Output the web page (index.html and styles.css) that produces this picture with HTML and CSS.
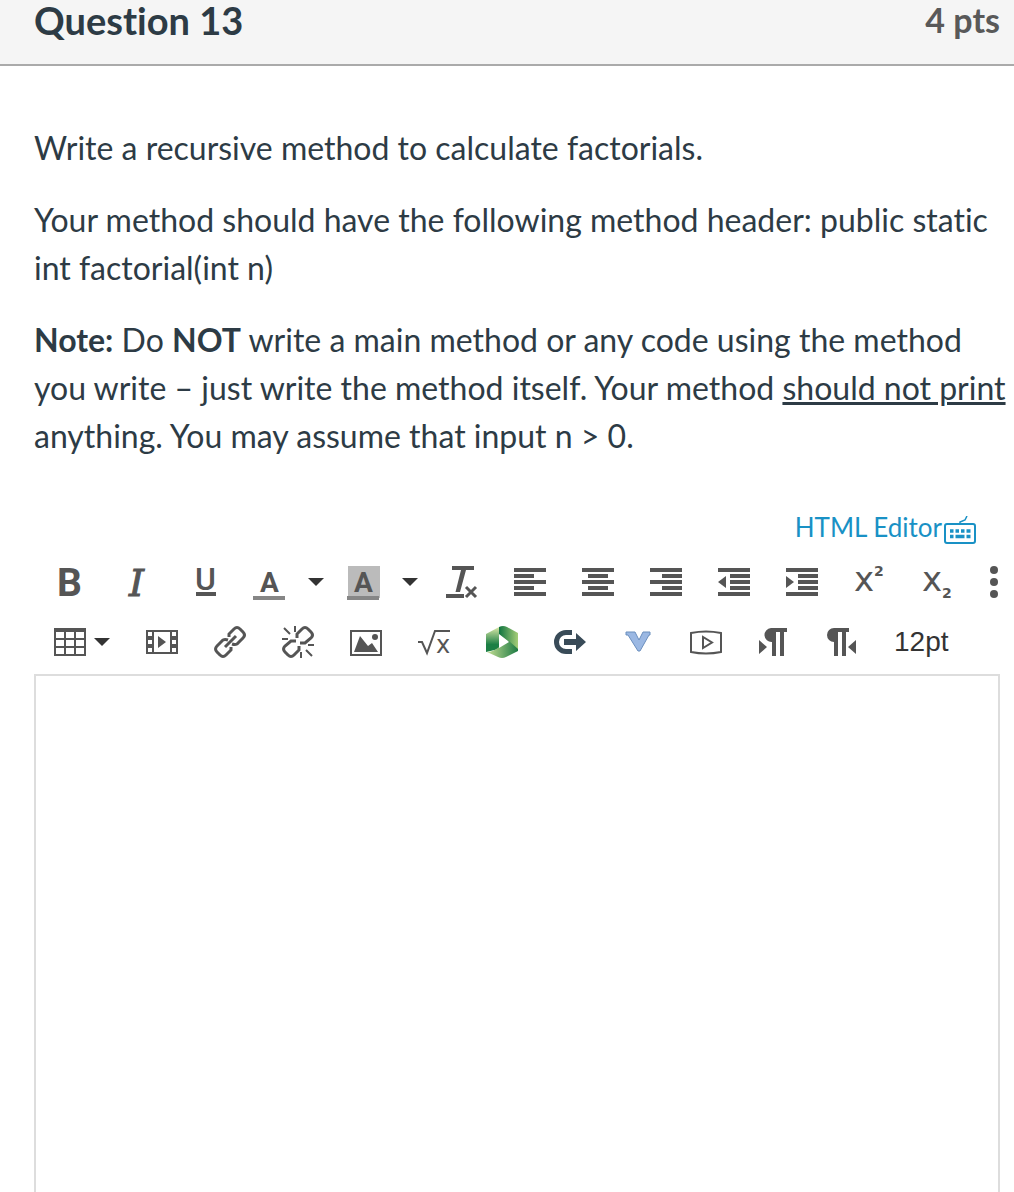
FILE: index.html
```html
<!DOCTYPE html>
<html lang="en">
	<head>
		<title>Question 13</title>
		<meta charset="utf-8">
		<meta name="viewport" content="width=device-width, initial-scale=1.0">
		<link rel="stylesheet" href="styles.css">
	</head>

	<body>
		<header class="question-header">
			<h1>Question 13</h1>
			<span class="points">4 pts</span>
		</header>

		<main class="question">
			<div class="question-text">
				<p>Write a recursive method to calculate factorials.</p>
				<p>Your method should have the following method header: public static int factorial(int n)</p>
				<p><strong>Note:</strong> Do <strong>NOT</strong> write a main method or any code using the method you write – just write the method itself. Your method <u>should not print</u> anything. You may assume that input n &gt; 0.</p>
			</div>

			<div class="editor-links">
				<a href="#html">HTML Editor</a>
				<a href="#shortcuts" aria-label="Keyboard shortcuts">
					<svg width="32" height="32" viewBox="0 0 32 32" fill="none" stroke="currentColor">
						<rect x="1" y="8" width="30" height="19" rx="2" stroke-width="2"/>
						<path d="M16 8V6l5-2 2-4" stroke-width="1.5"/>
						<path d="M6 15h3.500m2 0h3.500m2 0h3.500m2 0h4M6 20.500h3.500m2 0h9m2 0h4" stroke-width="3.500"/>
					</svg>
				</a>
			</div>

			<div class="toolbar">
				<div class="toolbar-row">
					<button type="button" aria-label="Bold"><svg class="icon" viewBox="0 0 32 32"><text class="bold" x="3" y="30">B</text></svg></button>
					<button type="button" aria-label="Italic"><svg class="icon" viewBox="0 0 32 32"><text class="italic" x="7" y="30">I</text></svg></button>
					<button type="button" aria-label="Underline"><svg class="icon" viewBox="0 0 32 32"><text class="under" x="5" y="24">U</text><path d="M6 26h20v4H6z"/></svg></button>
					<button type="button" class="split" aria-label="Text color"><svg class="icon icon-color" viewBox="0 0 33 32"><text class="color" x="7" y="26">A</text><path class="swatch" d="M0 30h32v4H0z"/></svg><i class="caret"></i></button>
					<button type="button" class="split" aria-label="Background color"><svg class="icon icon-color" viewBox="0 0 33 32"><path class="fill" d="M1 0h32v32H1z"/><text class="color" x="7" y="26">A</text><path class="swatch" d="M0 30h32v4H0z"/></svg><i class="caret"></i></button>
					<button type="button" aria-label="Clear formatting"><svg class="icon" viewBox="0 0 32 32"><path d="M6 0h22v4H20l-6 22h-4.500L15 4H6zM0 28h18v4H0z"/><path class="line thick" d="M20 21l10 10m0-10L20 31"/></svg></button>
					<button type="button" aria-label="Align left"><svg class="icon" viewBox="0 0 32 32"><path d="M0 2h32v4H0zM0 8h20v4H0zM0 14h32v4H0zM0 20h20v4H0zM0 26h32v4H0z"/></svg></button>
					<button type="button" aria-label="Align center"><svg class="icon" viewBox="0 0 32 32"><path d="M0 2h32v4H0zM6 8h20v4H6zM0 14h32v4H0zM6 20h20v4H6zM0 26h32v4H0z"/></svg></button>
					<button type="button" aria-label="Align right"><svg class="icon" viewBox="0 0 32 32"><path d="M0 2h32v4H0zM12 8h20v4H12zM0 14h32v4H0zM12 20h20v4H12zM0 26h32v4H0z"/></svg></button>
					<button type="button" aria-label="Decrease indent"><svg class="icon" viewBox="0 0 32 32"><path d="M0 2h32v4H0zM12 8h20v4H12zM12 14h20v4H12zM12 20h20v4H12zM0 26h32v4H0zM8 10v12L0 16z"/></svg></button>
					<button type="button" aria-label="Increase indent"><svg class="icon" viewBox="0 0 32 32"><path d="M0 2h32v4H0zM12 8h20v4H12zM12 14h20v4H12zM12 20h20v4H12zM0 26h32v4H0zM0 10v12l8-6z"/></svg></button>
					<button type="button" aria-label="Superscript"><svg class="icon" viewBox="0 0 32 32"><text class="var" x="0" y="25">x</text><text class="script" x="20" y="10">2</text></svg></button>
					<button type="button" aria-label="Subscript"><svg class="icon" viewBox="0 0 32 32"><text class="var" x="0" y="25">x</text><text class="script" x="20" y="32">2</text></svg></button>
					<button type="button" class="more" aria-label="More"><svg class="icon" viewBox="0 0 32 32"><circle cx="16" cy="4" r="4"/><circle cx="16" cy="16" r="4"/><circle cx="16" cy="28" r="4"/></svg></button>
				</div>

				<div class="toolbar-row">
					<button type="button" class="table-menu" aria-label="Table"><svg class="icon" viewBox="0 0 32 32"><path fill-rule="evenodd" d="M0 2h32v28H0zM2 6v6h8V6zM12 6v6h8V6zM22 6v6h8V6zM2 14v6h8v-6zM12 14v6h8v-6zM22 14v6h8v-6zM2 22v6h8v-6zM12 22v6h8v-6zM22 22v6h8v-6z"/></svg><i class="caret"></i></button>
					<button type="button" aria-label="Media"><svg class="icon" viewBox="0 0 32 32"><path fill-rule="evenodd" d="M0 4h32v24H0zM8 6v20h16V6zM2 6v4h4V6zM2 14v4h4v-4zM2 22v4h4v-4zM26 6v4h4V6zM26 14v4h4v-4zM26 22v4h4v-4zM12 10v12l8-6z"/></svg></button>
					<button type="button" aria-label="Link"><svg class="icon" viewBox="0 0 32 32"><path class="line thick" d="M15 11v-3l5-5q3-3 6 0l3 3q3 3 0 6l-6 6q-2 1-5 0M17 21v3l-5 5q-3 3-6 0l-3-3q-3-3 0-6l6-6q2-1 5 0M11 21l11-11"/></svg></button>
					<button type="button" aria-label="Remove link"><svg class="icon" viewBox="0 0 32 32"><path class="line thick" d="M15 12V8l5-5q3-3 6 0l3 3q3 3 0 6l-6 5h-5M17 20v4l-5 5q-3 3-6 0l-3-3q-3-3 0-6l6-5h5"/><path class="line" d="M2 2l6 6M13 0v6M0 13h6M24 24l6 6M19 26v6M26 19h6"/></svg></button>
					<button type="button" aria-label="Image"><svg class="icon" viewBox="0 0 32 32"><path fill-rule="evenodd" d="M0 4h32v26H0zM2 6v22h28V6z"/><circle cx="25" cy="11" r="3"/><path d="M4 26l6-16 8 10 4-3 6 9z"/></svg></button>
					<button type="button" aria-label="Math equation"><svg class="icon" viewBox="0 0 32 32"><path class="line" d="M0 16h4l5 11 8-22h15"/><text class="root" x="18" y="27">x</text></svg></button>
					<button type="button" aria-label="Panopto">
						<svg class="icon" viewBox="0 0 32 32">
							<linearGradient id="left-side" x2="0" y2="1"><stop offset="0" stop-color="#dbe8a8"/><stop offset=".7" stop-color="#1c7f45"/></linearGradient>
							<linearGradient id="right-side"><stop offset="0" stop-color="#0f7440"/><stop offset="1" stop-color="#a5cd78"/></linearGradient>
							<linearGradient id="bottom-side"><stop offset="0" stop-color="#c4de93"/><stop offset="1" stop-color="#1c7a43"/></linearGradient>
							<path fill="url(#left-side)" d="M0 8L13 1v22L0 26z"/>
							<path fill="url(#right-side)" d="M13 1q4-2 8 0l11 6v18L22 15l-9-7z"/>
							<path fill="url(#bottom-side)" d="M1 26q6 0 12-5l10-6 9 8v2l-12 6q-4 2-8 0z"/>
							<path fill="#fff" d="M13 10l10 6-10 6z"/>
						</svg>
					</button>
					<button type="button" aria-label="Embed content"><svg class="icon navy" viewBox="0 0 32 32"><path d="M18 4h-6a12 12 0 0 0 0 24h6v-5h-6a7 7 0 0 1 0-14h6z"/><path d="M10 13h12V7l10 9-10 9v-6H10z"/></svg></button>
					<button type="button" aria-label="Vendor tool"><svg class="icon" viewBox="0 0 32 32"><path fill="#9bb8e3" stroke="#6b8fbe" d="M4 6h9l4 8 4-8h7v3h-1l-9 16h-2L6 9H4z"/></svg></button>
					<button type="button" aria-label="Video"><svg class="icon" viewBox="0 0 32 32"><path class="line" d="M1 7q15-3 30 0v19q-15 3-30 0zM13 11v11l9-5.500z"/></svg></button>
					<button type="button" aria-label="Left to right"><svg class="icon" viewBox="0 0 32 32"><path d="M1 14v14l8-7zM13 2h16v4h-3v24h-4V6h-4v24h-4V16a7 7 0 0 1-1-14z"/></svg></button>
					<button type="button" aria-label="Right to left"><svg class="icon" viewBox="0 0 32 32"><path d="M30 14v14l-8-7zM8 2h15v4h-3v24h-4V6h-4v24H8V16A7 7 0 0 1 8 2z"/></svg></button>
					<button type="button" class="font-size">12pt</button>
				</div>
			</div>

			<textarea class="answer" aria-label="Answer"></textarea>
		</main>
	</body>
</html>
```
FILE: styles.css
```css
* {
	box-sizing: border-box;
}

body {
	margin: 0;
	min-height: 100vh;
	display: flex;
	flex-direction: column;
	background: #fff;
	color: #2d3b45;
	font-family: Lato, sans-serif;
	font-size: 32px;
	font-variant-ligatures: none;
	line-height: 48px;
}

.question-header {
	display: flex;
	justify-content: space-between;
	padding: 0 14px 24px 34px;
	background: #f5f5f5;
	border-bottom: 2px solid #aaa;
	line-height: 40px;
}

.question-header h1 {
	margin: 0;
	font-size: 38px;
	line-height: inherit;
}

.points {
	color: #595959;
	font-size: 34px;
	font-weight: bold;
}

.question {
	flex: 1;
	display: flex;
	flex-direction: column;
	padding: 58px 14px 0 34px;
}

.question-text {
	margin-right: -8px;
}

.question-text p {
	margin: 0 0 24px;
}

.editor-links {
	display: flex;
	justify-content: flex-end;
	gap: 2px;
	padding: 27px 24px 0 0;
	font-size: 26px;
	line-height: 32px;
}

.editor-links a {
	color: #1991c5;
	text-decoration: none;
}

.editor-links svg {
	display: block;
	margin-top: 5px;
}

/* toolbar */
.toolbar {
	margin: 4px -14px 0 2px;
}

.toolbar-row {
	display: flex;
	height: 60px;
}

.toolbar button {
	display: flex;
	flex: none;
	align-items: center;
	width: 68px;
	padding: 0 18px;
	border: 0;
	background: none;
	color: #333;
}

.toolbar .split {
	width: 94px;
	padding: 0 14px 0 13px;
	gap: 22px;
}

.toolbar .table-menu {
	width: 92px;
	padding-right: 0;
	gap: 8px;
}

.toolbar .more {
	width: 42px;
	padding: 0 6px;
}

.toolbar .font-size {
	width: 90px;
	font: 28px "Liberation Sans", sans-serif;
}

.caret {
	border: 8px solid transparent;
	border-top-color: #333;
	border-bottom: 0;
}

.icon {
	flex: none;
	width: 32px;
	height: 32px;
	overflow: visible;
	fill: #555;
}

.icon-color {
	width: 33px;
}

.icon text {
	font-family: Roboto, sans-serif;
}

.icon .bold { font-size: 39px; font-weight: bold; }
.icon .italic { font: italic 38px "DejaVu Serif", serif; stroke: #555; }
.icon .under { font-size: 32px; font-weight: 500; }
.icon .color { font-size: 28px; font-weight: bold; }
.icon .var { font: 34px "DejaVu Sans", sans-serif; }
.icon .script { font: bold 14px "DejaVu Sans", sans-serif; }
.icon .root { font: 24px "DejaVu Sans", sans-serif; }

.swatch { fill: #868686; }
.fill { fill: #bbb; }
.navy { fill: #394b58; }

.line {
	fill: none;
	stroke: #555;
	stroke-width: 2;
}

.thick {
	stroke-width: 3;
}

.answer {
	flex: 1;
	display: block;
	width: 100%;
	min-height: 500px;
	margin-top: 2px;
	padding: 16px;
	border: 2px solid #ddd;
	border-bottom: 0;
	background: #fff;
	font: inherit;
	resize: none;
	outline: 0;
}
```
